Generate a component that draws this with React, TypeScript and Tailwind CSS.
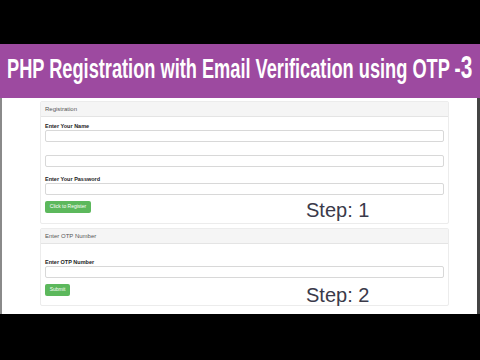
import { useLayoutEffect, useRef, useState } from "react";

const Field = ({ label }: { label?: string }) => (
  <div className="flex flex-col">
    {label ? (
      <div className="h-[8px] text-[5.5px] font-bold leading-[8px] text-[#222]">{label}</div>
    ) : null}
    <div className="h-[12px] rounded-[2px] border border-[#d8d8d8] bg-white" />
  </div>
);

const Title = () => {
  const ref = useRef<HTMLDivElement | null>(null);
  const [scale, setScale] = useState(1);

  useLayoutEffect(() => {
    const el = ref.current;
    if (!el) return;
    const w = el.scrollWidth;
    if (w > 0) setScale(465 / w);
  }, []);

  return (
    <div
      ref={ref}
      className="w-max shrink-0 origin-left whitespace-nowrap text-[28px] font-bold leading-none text-white"
      style={{
        fontFamily: "'Liberation Sans Narrow', 'Liberation Sans', Arial, sans-serif",
        transform: `scaleX(${scale})`,
      }}
    >
      PHP Registration with Email Verification using OTP -<span className="text-[32px]">3</span>
    </div>
  );
};

export default function App() {
  return (
    <div className="flex h-[360px] w-[480px] flex-col bg-black" style={{ fontFamily: "'Liberation Sans', Arial, sans-serif" }}>
      <div className="h-[44px]" />
      <div className="flex h-[54px] items-center overflow-hidden bg-[#9d4aa0] pb-[9px] pl-[7px]">
        <Title />
      </div>
      <div className="flex h-[216px] border-l-2 border-r-[3px] border-l-[#8a8a8a] border-r-[#444] bg-white pl-[38px] pt-[3px]">
        <div className="flex w-[409px] flex-col gap-[4px]">
          <div className="flex h-[123px] flex-col rounded-[2px] border border-[#ececec]">
            <div className="h-[15px] border-b border-[#e4e4e4] bg-[#f5f5f5] pl-[4px] text-[6px] leading-[14px] text-[#555]">
              Registration
            </div>
            <div className="flex flex-col px-[4px] pt-[5px]">
              <Field label="Enter Your Name" />
              <div className="h-[13px]" />
              <Field />
              <div className="h-[8px]" />
              <Field label="Enter Your Password" />
              <div className="relative mt-[6px] flex h-[12px]">
                <div className="flex w-[46px] items-center justify-center rounded-[2px] bg-[#5cb85c] text-[5px] text-white">
                  Click to Register
                </div>
                <div className="absolute left-[261px] top-[-1px] text-[20px] leading-none text-[#3a3a4a]">Step: 1</div>
              </div>
            </div>
          </div>
          <div className="flex h-[78px] flex-col rounded-[2px] border border-[#ececec]">
            <div className="h-[15px] border-b border-[#e4e4e4] bg-[#f5f5f5] pl-[4px] text-[6px] leading-[14px] text-[#555]">
              Enter OTP Number
            </div>
            <div className="flex flex-col px-[4px] pt-[14px]">
              <Field label="Enter OTP Number" />
              <div className="relative mt-[6px] flex h-[12px]">
                <div className="flex w-[25px] items-center justify-center rounded-[2px] bg-[#5cb85c] text-[5px] text-white">
                  Submit
                </div>
                <div className="absolute left-[261px] top-[1px] text-[20px] leading-none text-[#3a3a4a]">Step: 2</div>
              </div>
            </div>
          </div>
        </div>
      </div>
    </div>
  );
}
